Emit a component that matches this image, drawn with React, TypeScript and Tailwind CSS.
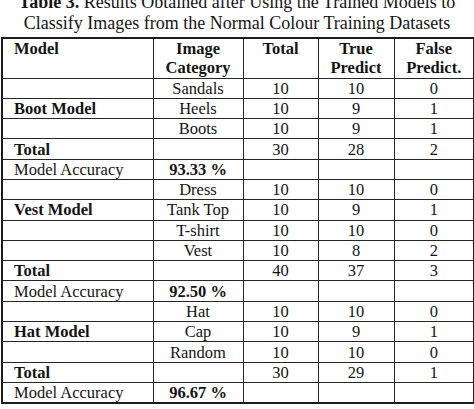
const rows: { model?: string; cat?: string; total?: string; tp?: string; fp?: string; bold?: boolean; acc?: string }[] = [
  { cat: 'Sandals', total: '10', tp: '10', fp: '0' },
  { model: 'Boot Model', cat: 'Heels', total: '10', tp: '9', fp: '1' },
  { cat: 'Boots', total: '10', tp: '9', fp: '1' },
  { model: 'Total', total: '30', tp: '28', fp: '2' },
  { acc: '93.33 %' },
  { cat: 'Dress', total: '10', tp: '10', fp: '0' },
  { model: 'Vest Model', cat: 'Tank Top', total: '10', tp: '9', fp: '1' },
  { cat: 'T-shirt', total: '10', tp: '10', fp: '0' },
  { cat: 'Vest', total: '10', tp: '8', fp: '2' },
  { model: 'Total', total: '40', tp: '37', fp: '3' },
  { acc: '92.50 %' },
  { cat: 'Hat', total: '10', tp: '10', fp: '0' },
  { model: 'Hat Model', cat: 'Cap', total: '10', tp: '9', fp: '1' },
  { cat: 'Random', total: '10', tp: '10', fp: '0' },
  { model: 'Total', total: '30', tp: '29', fp: '1' },
  { acc: '96.67 %' },
];

const cell = 'border border-[#262626] p-0 text-center align-middle';

export default function App() {
  return (
    <div className="w-[474px] h-[409px] overflow-hidden bg-white text-[#141414] font-['Liberation_Serif',serif]">
      <div className="mt-[-8px] text-center text-[18px] leading-[21px]">
        <p>
          <span className="font-bold">Table 3.</span> Results Obtained after Using the Trained Models to
        </p>
        <p>Classify Images from the Normal Colour Training Datasets</p>
      </div>
      <table className="mt-[3px] ml-[1px] w-[472px] table-fixed border-collapse border-2 border-[#1c1c1c] text-[16.5px] leading-[19px]">
        <colgroup>
          <col className="w-[151px]" />
          <col className="w-[90px]" />
          <col className="w-[75px]" />
          <col className="w-[76px]" />
          <col className="w-[80px]" />
        </colgroup>
        <thead>
          <tr className="h-[40px] font-bold">
            <th className={`${cell} !text-left !align-top pl-[11px]`}>Model</th>
            <th className={`${cell} !align-top`}>
              Image
              <br />
              Category
            </th>
            <th className={`${cell} !align-top`}>Total</th>
            <th className={`${cell} !align-top`}>
              True
              <br />
              Predict
            </th>
            <th className={`${cell} !align-top`}>
              False
              <br />
              Predict.
            </th>
          </tr>
        </thead>
        <tbody>
          {rows.map((r, i) => (
            <tr key={i} className="h-[20.3px]">
              <td className={`${cell} !text-left pl-[11px] ${r.acc ? '' : 'font-bold'}`}>
                {r.acc ? 'Model Accuracy' : r.model}
              </td>
              <td className={`${cell} ${r.acc ? 'font-bold' : ''}`}>{r.acc ?? r.cat}</td>
              <td className={cell}>{r.total}</td>
              <td className={cell}>{r.tp}</td>
              <td className={cell}>{r.fp}</td>
            </tr>
          ))}
        </tbody>
      </table>
    </div>
  );
}
